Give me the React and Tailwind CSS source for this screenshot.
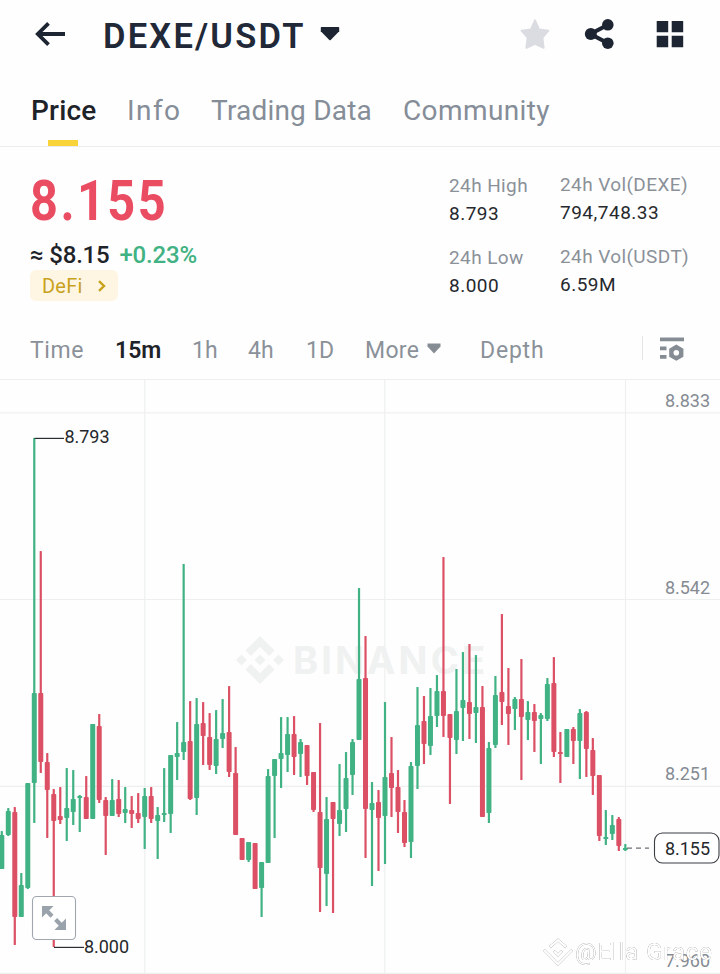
import React from "react";

const UP = "#41b283";
const DOWN = "#db5064";

// direction, high, body top, body bottom, low (chart y coordinates)
const candles = [
  ["u", 831, 835, 869, 869], ["u", 808, 811, 835, 836], ["d", 807, 812, 917, 945], ["u", 873, 885, 917, 917],
  ["u", 783, 783, 888, 889], ["u", 438, 693, 783, 823], ["d", 551, 693, 762, 773], ["d", 753, 762, 790, 838],
  ["d", 789, 794, 821, 947], ["d", 787, 816, 820, 824], ["u", 768, 808, 818, 841], ["u", 770, 799, 812, 825],
  ["u", 795, 796, 798, 832], ["d", 776, 797, 819, 819], ["u", 724, 724, 819, 819], ["d", 714, 726, 800, 803],
  ["d", 797, 800, 816, 855], ["u", 779, 800, 816, 816], ["d", 780, 799, 814, 817], ["u", 787, 809, 813, 823],
  ["d", 796, 810, 814, 828], ["d", 793, 813, 819, 823], ["u", 788, 796, 817, 849], ["d", 787, 796, 819, 823],
  ["u", 807, 815, 821, 859], ["u", 768, 813, 815, 822], ["u", 755, 755, 814, 833], ["u", 722, 753, 757, 780],
  ["u", 564, 742, 752, 760], ["d", 701, 741, 799, 800], ["u", 698, 724, 798, 815], ["d", 702, 723, 736, 765],
  ["d", 713, 737, 765, 770], ["u", 710, 739, 766, 774], ["u", 699, 733, 739, 748], ["d", 686, 732, 772, 777],
  ["d", 747, 773, 835, 835], ["d", 838, 838, 860, 860], ["u", 842, 842, 860, 862], ["d", 843, 843, 889, 889],
  ["u", 862, 862, 888, 917], ["u", 769, 776, 863, 863], ["u", 759, 759, 776, 838], ["u", 717, 753, 759, 788],
  ["u", 717, 734, 755, 772], ["d", 716, 734, 757, 775], ["u", 739, 742, 754, 777], ["d", 745, 745, 776, 785],
  ["d", 772, 772, 810, 812], ["d", 723, 812, 868, 912], ["u", 797, 819, 874, 906], ["d", 802, 802, 819, 913],
  ["u", 764, 810, 824, 836], ["u", 752, 778, 809, 832], ["u", 739, 742, 775, 795], ["u", 588, 679, 740, 740],
  ["d", 636, 678, 809, 858], ["u", 782, 803, 810, 886], ["d", 790, 802, 818, 871], ["u", 702, 777, 816, 864],
  ["d", 737, 773, 788, 817], ["d", 770, 787, 812, 833], ["d", 800, 812, 843, 847], ["u", 762, 766, 842, 858],
  ["u", 687, 725, 766, 789], ["d", 696, 721, 744, 764], ["u", 688, 716, 746, 755], ["u", 675, 691, 716, 727],
  ["d", 557, 691, 716, 737], ["d", 714, 714, 738, 804], ["u", 669, 711, 740, 754], ["u", 652, 700, 708, 741],
  ["d", 644, 702, 714, 739], ["u", 655, 707, 713, 743], ["d", 686, 707, 817, 817], ["u", 742, 748, 813, 823],
  ["u", 676, 695, 745, 748], ["d", 614, 692, 702, 725], ["d", 668, 706, 714, 745], ["u", 697, 699, 709, 730],
  ["d", 659, 699, 717, 780], ["u", 701, 712, 720, 740], ["d", 704, 712, 721, 752], ["u", 713, 715, 719, 764],
  ["u", 678, 684, 719, 721], ["d", 657, 683, 752, 757], ["d", 732, 752, 754, 783], ["u", 729, 729, 757, 757],
  ["d", 727, 729, 741, 764], ["u", 709, 713, 741, 779], ["d", 711, 712, 749, 777], ["d", 738, 750, 776, 795],
  ["d", 775, 775, 836, 841], ["u", 810, 837, 839, 845], ["u", 815, 825, 834, 840], ["d", 817, 819, 846, 851],
  ["u", 844, 848, 850, 851],
];

function BinanceMark({ x, y, size, ...rest }) {
  return (
    <svg x={x} y={y} width={size} height={size} viewBox="0 0 48 48" {...rest}>
      <path d="M24 0 38.6 14.6 33.2 20 24 10.8 14.8 20 9.4 14.6Z" />
      <path d="M24 48 38.6 33.4 33.2 28 24 37.2 14.8 28 9.4 33.4Z" />
      <path d="M24 18.4 29.6 24 24 29.6 18.4 24Z" />
      <path d="M5.4 18.6 10.8 24 5.4 29.4 0 24Z" />
      <path d="M42.6 18.6 48 24 42.6 29.4 37.2 24Z" />
    </svg>
  );
}

function Chart() {
  return (
    <svg className="block h-[595px] w-[720px] font-[Roboto,sans-serif]" viewBox="0 379 720 595">
      <g stroke="#eeefef" strokeWidth="1.2">
        {[379.4, 412.8, 599.5, 786.4, 973.3].map((y) => (
          <path key={y} d={`M0 ${y}H720`} />
        ))}
        {[144.8, 384.8, 625.5].map((x) => (
          <path key={x} d={`M${x} 379V974`} />
        ))}
      </g>

      <g fill="#f0f1f1">
        <BinanceMark x={236} y={636} size={48} />
        <text x="293" y="674" fontSize="38" fontWeight="700" textLength="192" className="font-[Inter,sans-serif]">
          BINANCE
        </text>
      </g>

      {candles.map(([dir, high, top, bottom, low], i) => {
        const x = 1.8 + 6.495 * i;
        const color = dir === "u" ? UP : DOWN;
        return (
          <g key={i} fill={color}>
            <rect x={x - 1.1} y={high} width="2.2" height={low - high} rx="0.6" />
            <rect x={x - 2.5} y={top} width="5" height={Math.max(bottom - top, 1.5)} rx="0.8" />
          </g>
        );
      })}

      <g fill="none" stroke="#2a2d32" strokeWidth="1.2">
        <path d="M34.5 438.4H64" />
        <path d="M54 947.4H84" />
        <path d="M627 848.2H649" stroke="#6b7076" strokeDasharray="5 4" />
      </g>
      <g fill="#25282c" fontSize="18">
        <text x="64.5" y="443" textLength="45">8.793</text>
        <text x="84" y="953" textLength="45">8.000</text>
      </g>
      <g fill="#858b93" fontSize="18">
        <text x="665" y="407" textLength="45">8.833</text>
        <text x="665" y="594" textLength="45">8.542</text>
        <text x="665" y="780" textLength="45">8.251</text>
        <text x="665" y="967" textLength="45">7.960</text>
      </g>

      <rect x="654.5" y="833" width="64.5" height="30" rx="8" fill="#fff" stroke="#3a3d42" strokeWidth="1.1" />
      <text x="665" y="855" fontSize="18" textLength="45" fill="#25282c">8.155</text>

      <rect x="32.5" y="896.5" width="43" height="43" rx="4" fill="#fff" stroke="#a0a7af" strokeWidth="1.1" />
      <g fill="#9aa2ab" stroke="#9aa2ab">
        <path d="M42 906H53.6L42 917.6ZM66 930H54.4L66 918.4Z" stroke="none" />
        <path d="M46 910 52 916.2M62 926 55.6 919.6" strokeWidth="4.2" />
      </g>

      <g className="drop-shadow-[0.6px_0.8px_0.5px_rgba(60,60,65,0.85)]" fill="#fff">
        <path
          d="M550 947 558 940 566 947M544 950 550 956M554 951 558 955 562 951M572 950 566 956M550 956 558 964 566 956"
          fill="none"
          stroke="#fff"
          strokeWidth="2.4"
        />
        <text x="575" y="960" fontSize="24" textLength="137">@Ella Grace</text>
      </g>
    </svg>
  );
}

function Stat({ label, value }) {
  return (
    <div className="flex h-[72px] flex-col whitespace-nowrap">
      <span className="text-[19px] leading-[28px] tracking-[0.4px] text-[#8b9199]">{label}</span>
      <span className="text-[19px] leading-[28px] tracking-[0.5px] text-[#25282d]">{value}</span>
    </div>
  );
}

export default function App() {
  return (
    <div className="h-[974px] w-[720px] overflow-hidden bg-[#fefefe] font-[Roboto,sans-serif] text-[#1e2329]">
      <header className="flex h-[72px] items-start">
        <svg className="mt-[18px] ml-[34px] h-8 w-8" viewBox="0 0 32 32" fill="none" stroke="#1e2532" strokeWidth="3.8">
          <path d="M31 16H3.5M14.5 5.3 3.8 16 14.5 26.7" />
        </svg>
        <h1 className="mt-[14px] ml-[37px] w-[217px] text-[34.5px] leading-[44px] font-semibold tracking-[2.2px] whitespace-nowrap text-[#212837]">
          DEXE/USDT
        </h1>
        <svg className="mt-[26px] h-[16px] w-5" viewBox="0 0 20 16" fill="#1e2532">
          <path d="M1.5 1H18.5Q19.2 1 19.2 1.7V5.3L10.7 14Q10 14.7 9.3 14L0.8 5.3V1.7Q.8 1 1.5 1Z" />
        </svg>
        <svg className="mt-[18px] ml-[179px] h-8 w-8" viewBox="0 0 32 32" fill="#dadce1" stroke="#dadce1" strokeWidth="2" strokeLinejoin="round">
          <path d="M16 2.3 20 11.4 29.4 12.7 23.4 19.6 24.6 29.8 16 25.8 7.4 29.8 8.6 19.6 2.6 12.7 12 11.4Z" />
        </svg>
        <svg className="mt-[18px] ml-[33px] h-8 w-8" viewBox="0 0 32 32" fill="#1e2532" stroke="#1e2532">
          <path d="M23.5 7 6.5 16 23.5 25" fill="none" strokeWidth="4.2" />
          <circle cx="23.8" cy="6.8" r="5.8" stroke="none" />
          <circle cx="6.8" cy="16" r="6" stroke="none" />
          <circle cx="23.8" cy="25.2" r="5.8" stroke="none" />
        </svg>
        <svg className="mt-[20px] ml-[40px] h-7 w-7" viewBox="0 0 28 28" fill="#1e2532">
          <path d="M.7 .9H12.2V12.2H.7ZM15.7 .9H27.2V12.2H15.7ZM.7 15.7H12.2V27.2H.7ZM15.7 15.7H27.2V27.2H15.7Z" />
        </svg>
      </header>

      <nav className="flex h-[75px] border-b border-[#ececee] pl-[31px] text-[28px] leading-[36px] whitespace-nowrap text-[#858d98]">
        <div className="flex w-[96px] flex-col">
          <span className="mt-[21px] font-medium tracking-[0.2px] text-[#1e2329]">Price</span>
          <span className="mt-[11px] ml-[17px] h-[6px] w-[30px] bg-[#f8d33a]" />
        </div>
        <span className="mt-[21px] w-[84px] tracking-[1.4px]">Info</span>
        <span className="mt-[21px] w-[192px] tracking-[0.2px]">Trading Data</span>
        <span className="mt-[21px] tracking-[0.4px]">Community</span>
      </nav>

      <section className="flex h-[174px]">
        <div className="flex w-[449px] flex-col pl-[30px]">
          <span className="mt-[24px] h-[60px] origin-left scale-x-[0.87] text-[56px] leading-[60px] font-bold tracking-[2.8px] text-[#ea4c62]">
            8.155
          </span>
          <div className="mt-[10px] flex h-[28px] gap-[10px] text-[24px] leading-[28px] font-medium tracking-[-0.2px] whitespace-nowrap">
            <span>≈ $8.15</span>
            <span className="text-[#41b283]">+0.23%</span>
          </div>
          <div className="mt-px flex h-[31px] w-[88px] items-center rounded-[6px] bg-[#fef6e3] pl-[12px]">
            <span className="w-[56px] text-[20px] tracking-[0.2px] text-[#c9a21d]">DeFi</span>
            <svg className="h-3 w-2" viewBox="0 0 8 12" fill="none" stroke="#c9a21d" strokeWidth="2.4">
              <path d="M1 1.2 6 6 1 10.8" />
            </svg>
          </div>
        </div>
        <div className="mt-[25px] w-[111px]">
          <Stat label="24h High" value="8.793" />
          <Stat label="24h Low" value="8.000" />
        </div>
        <div className="mt-[23.5px]">
          <Stat label="24h Vol(DEXE)" value="794,748.33" />
          <Stat label="24h Vol(USDT)" value="6.59M" />
        </div>
      </section>

      <div className="flex h-[58px] pt-[13px] pl-[30px] text-[23px] leading-[34px] whitespace-nowrap text-[#8b9199]">
        <span className="w-[85px] tracking-[0.6px]">Time</span>
        <span className="w-[77px] font-semibold text-[#1e2329]">15m</span>
        <span className="w-[56px]">1h</span>
        <span className="w-[58px]">4h</span>
        <span className="w-[59px]">1D</span>
        <span className="w-[62px] tracking-[0.3px]">More</span>
        <svg className="mt-[9px] h-[11px] w-[14px]" viewBox="0 0 14 11" fill="#858c94">
          <path d="M.5 .5H13.5V3.5L7 10.5 .5 3.5Z" />
        </svg>
        <span className="ml-[39px] w-[162px] tracking-[0.8px]">Depth</span>
        <span className="mt-[2px] h-[24px] w-px bg-[#e2e4e6]" />
        <svg className="mt-[3px] ml-[17px] h-6 w-6" viewBox="0 0 24 24" fill="#858c94">
          <path d="M0 .6H24V4.2H0ZM0 9.4H6.5V13.2H0ZM0 18H6.5V21.8H0Z" />
          <path fillRule="evenodd" d="M16.3 7.6 23.4 11.7V19.7L16.3 23.8 9.2 19.7V11.7ZM16.3 12.9A2.8 2.8 0 1 0 16.3 18.5 2.8 2.8 0 1 0 16.3 12.9Z" />
        </svg>
      </div>

      <Chart />
    </div>
  );
}
